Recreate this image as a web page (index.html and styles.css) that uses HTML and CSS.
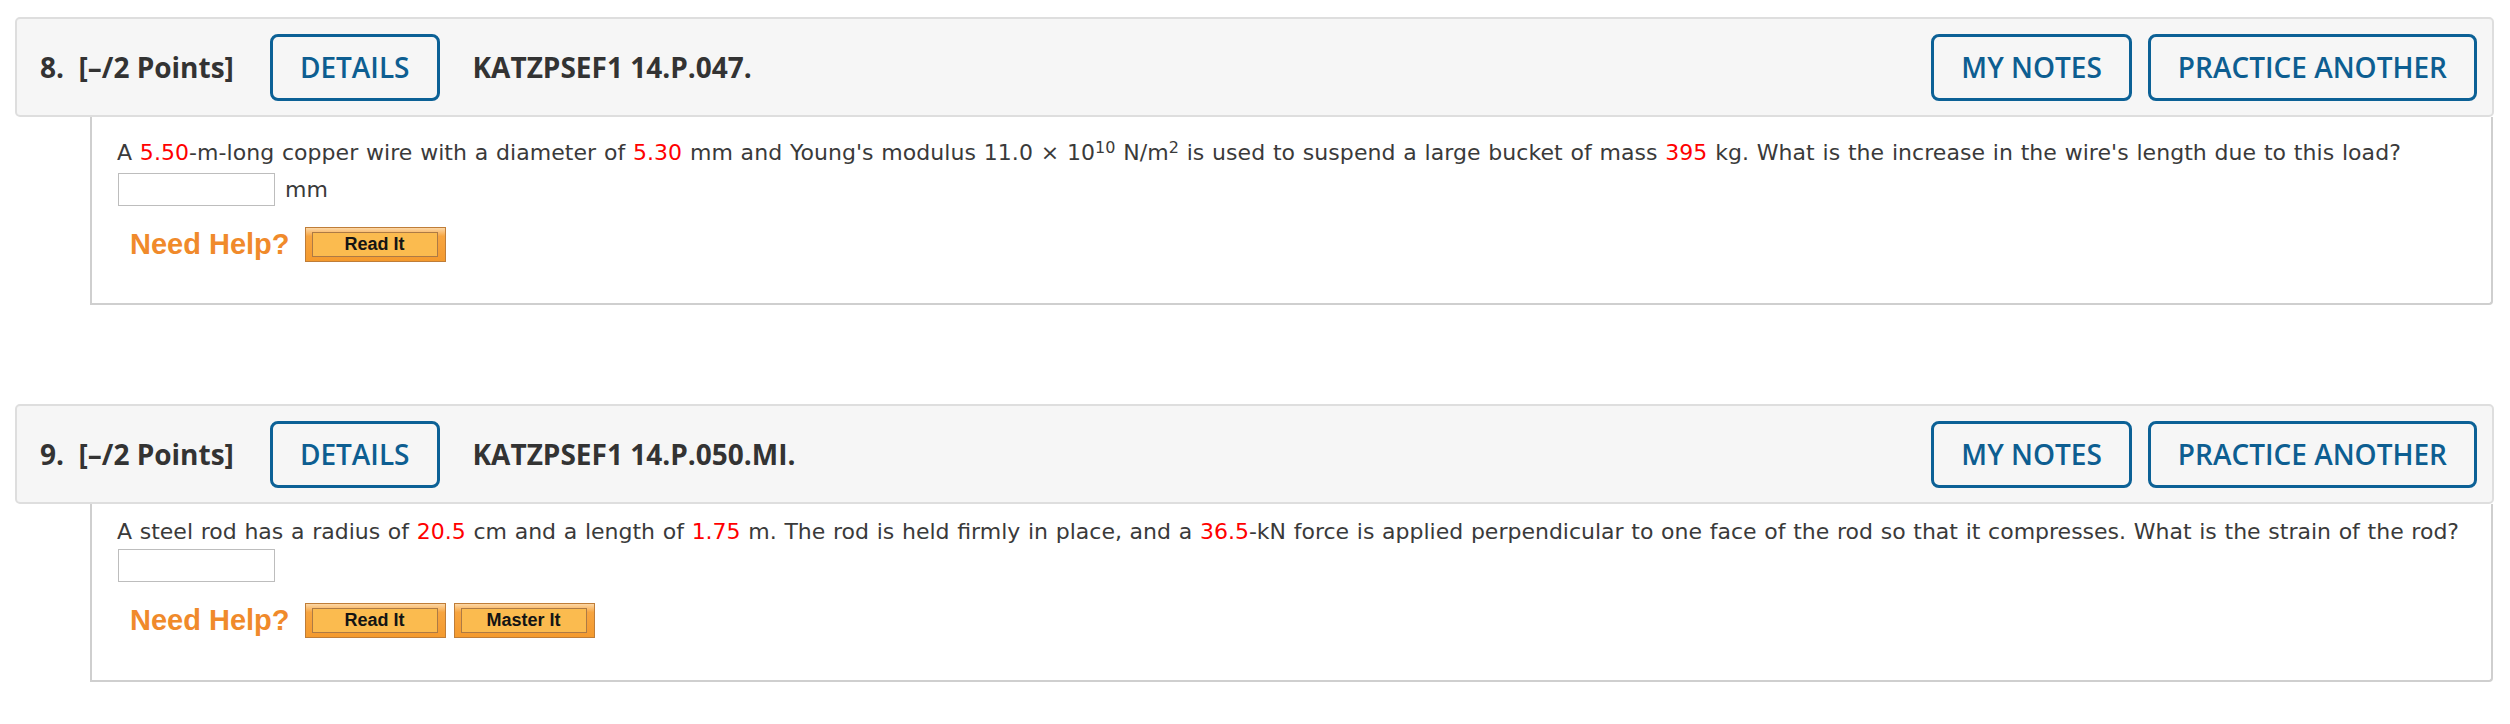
FILE: index.html
```html
<!DOCTYPE html>
<html lang="en">
<head>
  <meta charset="UTF-8">
  <title>Assignment Questions</title>
  <link rel="stylesheet" href="styles.css">
</head>
<body>
  <div class="page">

    <div class="question">
      <div class="q-header">
        <div class="q-title">8.&nbsp; [–/2 Points]</div>
        <button class="btn-outline">DETAILS</button>
        <div class="q-code">KATZPSEF1 14.P.047.</div>
        <div class="q-actions">
          <button class="btn-outline">MY NOTES</button>
          <button class="btn-outline">PRACTICE ANOTHER</button>
        </div>
      </div>
      <div class="q-body">
        <div class="stem stem-sup">
          A <span class="given">5.50</span>-m-long copper wire with a diameter of <span class="given">5.30</span> mm and Young's modulus 11.0 × 10<sup>10</sup> N/m<sup>2</sup> is used to suspend a large bucket of mass <span class="given">395</span> kg. What is the increase in the wire's length due to this load?
        </div>
        <div class="answer answer-sup">
          <input type="text">
          <span class="unit">mm</span>
        </div>
        <div class="help">
          <span class="need-help">Need Help?</span>
          <button class="help-btn"><span>Read It</span></button>
        </div>
      </div>
    </div>

    <div class="question">
      <div class="q-header">
        <div class="q-title">9.&nbsp; [–/2 Points]</div>
        <button class="btn-outline">DETAILS</button>
        <div class="q-code">KATZPSEF1 14.P.050.MI.</div>
        <div class="q-actions">
          <button class="btn-outline">MY NOTES</button>
          <button class="btn-outline">PRACTICE ANOTHER</button>
        </div>
      </div>
      <div class="q-body q-body-last">
        <div class="stem">
          A steel rod has a radius of <span class="given">20.5</span> cm and a length of <span class="given">1.75</span> m. The rod is held firmly in place, and a <span class="given">36.5</span>-kN force is applied perpendicular to one face of the rod so that it compresses. What is the strain of the rod?
        </div>
        <div class="answer">
          <input type="text">
        </div>
        <div class="help">
          <span class="need-help">Need Help?</span>
          <button class="help-btn"><span>Read It</span></button>
          <button class="help-btn"><span>Master It</span></button>
        </div>
      </div>
    </div>

  </div>
</body>
</html>
```

FILE: styles.css
```css
:root {
  --text: #3a3a3a;
  --given: #ff0000;
  --blue: #0c6196;
  --blue-text: #0d5e91;
  --header-bg: #f6f6f6;
  --header-border: #dedede;
  --body-border: #cfcfcf;
  --help-orange: #f08a2b;
}

* {
  margin: 0;
  padding: 0;
  box-sizing: border-box;
}

body {
  background: #fff;
  color: var(--text);
  font-family: "DejaVu Sans", Verdana, sans-serif;
}

.page {
  padding: 17px 16px 0 15px;
}

.question + .question {
  margin-top: 99px;
}

/* header bar */
.q-header {
  height: 100px;
  display: flex;
  align-items: center;
  gap: 36px;
  padding: 0 15px 0 23px;
  background: var(--header-bg);
  border: 2px solid var(--header-border);
  border-radius: 5px;
  font-family: "Open Sans", sans-serif;
  font-size: 28px;
  font-weight: 700;
  color: #333;
}

.q-code {
  margin-left: -3px;
}

.q-actions {
  margin-left: auto;
  display: flex;
  gap: 16px;
}

.btn-outline {
  height: 67px;
  padding: 0 27px;
  background: transparent;
  border: 3px solid var(--blue);
  border-radius: 8px;
  color: var(--blue-text);
  font-family: "Open Sans", sans-serif;
  font-size: 28px;
  font-weight: 600;
  cursor: pointer;
}

/* question body */
.q-body {
  margin-left: 75px;
  margin-right: 1px;
  padding: 15px 24px 41px 25px;
  border: 2px solid var(--body-border);
  border-top: none;
  border-radius: 0 0 4px 0;
}

.q-body-last {
  padding-bottom: 42px;
}

.stem {
  font-size: 22px;
  word-spacing: 0.7px;
}

.stem-sup {
  padding-top: 8px;
  letter-spacing: 0.05px;
}

.stem sup {
  font-size: 16px;
  line-height: 0;
  vertical-align: 7px;
}

.given {
  color: var(--given);
}

.answer {
  display: flex;
  align-items: center;
  gap: 10px;
  margin-top: 5px;
  margin-left: 1px;
}

.answer-sup {
  margin-top: 8px;
}

.answer input {
  width: 157px;
  height: 33px;
  border: 1px solid #bdbdbd;
  background: #fff;
  font-size: 20px;
}

.unit {
  font-size: 22px;
}

/* help buttons */
.help {
  display: flex;
  align-items: center;
  gap: 8px;
  margin-top: 21px;
  padding-left: 13px;
}

.need-help {
  margin-right: 7px;
  font-family: "Liberation Sans", Arial, sans-serif;
  font-size: 29px;
  font-weight: 700;
  color: var(--help-orange);
}

.help-btn {
  width: 141px;
  height: 35px;
  padding: 4px 7px 4px 6px;
  border: 1px solid #bf7d38;
  background: linear-gradient(#fcd7a6 0%, #f7a540 25%, #f49a2e 100%);
  cursor: pointer;
}

.help-btn span {
  display: flex;
  align-items: center;
  justify-content: center;
  height: 100%;
  border: 1px solid #ad7a45;
  background: #fbbb4f;
  font-family: "Liberation Sans", Arial, sans-serif;
  font-size: 18px;
  font-weight: 700;
  color: #141414;
}
```
